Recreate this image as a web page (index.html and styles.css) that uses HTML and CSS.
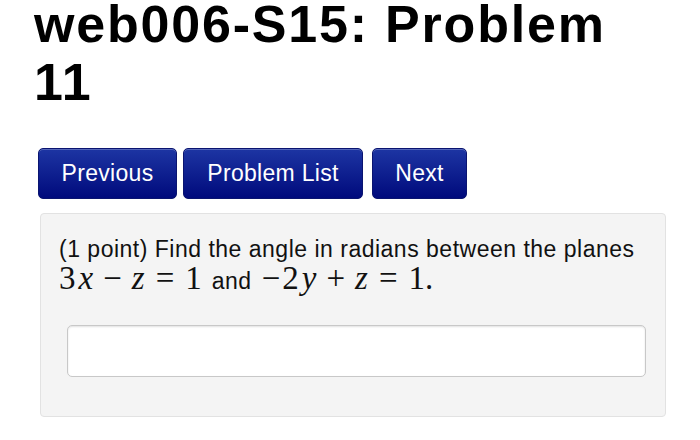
FILE: index.html
```html
<!DOCTYPE html>
<html>
<head>
<meta charset="utf-8">
<link rel="stylesheet" href="styles.css">
</head>
<body>
<h1 class="title">web006-S15: Problem 11</h1>
<div class="nav">
  <a class="btn btn-prev">Previous</a>
  <a class="btn btn-list">Problem List</a>
  <a class="btn btn-next">Next</a>
</div>
<div class="panel">
  <p class="problem">(1 point) Find the angle in radians between the planes<br><span class="math"><span class="mn">3</span><span class="mi sp">x</span><span class="mo">−</span><span class="mi">z</span><span class="mo rel">=</span><span class="mn">1</span></span><span class="word">and</span><span class="math"><span class="mo un">−</span><span class="mn">2</span><span class="mi sp">y</span><span class="mo">+</span><span class="mi">z</span><span class="mo rel">=</span><span class="mn">1.</span></span></p>
  <div class="answer"></div>
</div>
</body>
</html>
```
FILE: styles.css
```css
body {
  margin: 0;
  background: #ffffff;
  font-family: "Liberation Sans", Arial, sans-serif;
  color: #111111;
}
.title {
  margin: -5px 0 0 34px;
  width: 600px;
  font-size: 52px;
  line-height: 58px;
  font-weight: bold;
  letter-spacing: 1.8px;
  color: #000000;
}
.nav {
  display: flex;
  margin: 37px 0 0 38px;
}
.btn {
  display: flex;
  align-items: center;
  justify-content: center;
  height: 51px;
  box-sizing: border-box;
  padding: 0;
  font-size: 23px;
  letter-spacing: 0.3px;
  white-space: nowrap;
  color: #ffffff;
  background: linear-gradient(#1d35a3, #000a7c);
  border: 1px solid #0a1470;
  border-radius: 5px;
  box-shadow: inset 0 1px 0 rgba(255,255,255,0.25);
}
.btn-prev {
  width: 139px;
}
.btn-list {
  margin-left: 6px;
  width: 180px;
}
.btn-next {
  margin-left: 9px;
  width: 95px;
}
.panel {
  margin: 14px 0 0 40px;
  width: 626px;
  box-sizing: border-box;
  padding: 19px 18px 39px 18px;
  background: #f4f4f4;
  border: 1px solid #e2e2e2;
  border-radius: 4px;
}
.problem {
  margin: 0;
  font-size: 23px;
  line-height: 32px;
  letter-spacing: 0.5px;
  color: #111111;
  white-space: nowrap;
}
.word {
  margin: 0 10px;
}
.math {
  font-family: "Liberation Serif", "Times New Roman", serif;
  font-size: 33px;
  line-height: 0;
  letter-spacing: 0;
  color: #111111;
}
.mi {
  font-style: italic;
}
.mi.sp {
  margin-left: 3px;
}
.mo {
  margin: 0 10px;
}
.mo.rel {
  margin: 0 11px;
}
.mo.un {
  margin: 0 2px 0 0;
}
.answer {
  margin: 28px 0 0 8px;
  width: 579px;
  height: 52px;
  box-sizing: border-box;
  background: #ffffff;
  border: 1px solid #c8c8c8;
  border-radius: 5px;
  box-shadow: inset 0 1px 2px rgba(0,0,0,0.12);
}
```
